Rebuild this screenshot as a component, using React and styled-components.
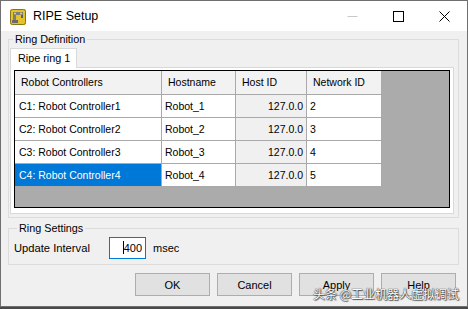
import React from "react";
import styled, { createGlobalStyle } from "styled-components";

const GlobalStyle = createGlobalStyle`
  html, body {
    margin: 0;
    padding: 0;
    background: #4a4a4a;
  }
  body {
    font-family: "Liberation Sans", Arial, sans-serif;
  }
`;

const rows = [
  { name: "C1: Robot Controller1", host: "Robot_1", hostId: "127.0.0", net: "2" },
  { name: "C2: Robot Controller2", host: "Robot_2", hostId: "127.0.0", net: "3" },
  { name: "C3: Robot Controller3", host: "Robot_3", hostId: "127.0.0", net: "4" },
  { name: "C4: Robot Controller4", host: "Robot_4", hostId: "127.0.0", net: "5", selected: true },
];

const RobotIcon = () => (
  <svg width="16" height="16" viewBox="0 0 16 16">
    <rect x="0" y="0" width="16" height="16" rx="2" fill="#e3c22b" />
    <rect x="0.5" y="0.5" width="15" height="15" rx="2" fill="none" stroke="#8a7418" />
    <path d="M3 3 H13 V6 H3 Z" fill="#7d7d7d" />
    <circle cx="5" cy="4.5" r="1" fill="#f2d84a" />
    <circle cx="11" cy="4.5" r="1" fill="#f2d84a" />
    <path d="M3 6 H6 V11 H3 Z" fill="#7d7d7d" />
    <path d="M11 6 H13 V9 H11 Z" fill="#5f5f5f" />
    <path d="M2 11 H8 V14 H2 Z" fill="#6a6a6a" />
  </svg>
);

const App = () => {
  return (
    <>
      <GlobalStyle />
      <Window>
        <TitleBar>
          <IconBox>
            <RobotIcon />
          </IconBox>
          <Title>RIPE Setup</Title>
          <Controls>
            <CaptionButton>
              <svg width="11" height="11" viewBox="0 0 11 11">
                <path d="M0.5 5.5 H10.5" stroke="#c8c8c8" strokeWidth="1" />
              </svg>
            </CaptionButton>
            <CaptionButton>
              <svg width="11" height="11" viewBox="0 0 11 11">
                <rect x="0.5" y="0.5" width="10" height="10" fill="none" stroke="#000" />
              </svg>
            </CaptionButton>
            <CaptionButton>
              <svg width="11" height="11" viewBox="0 0 11 11">
                <path d="M0.5 0.5 L10.5 10.5 M10.5 0.5 L0.5 10.5" stroke="#000" strokeWidth="1" />
              </svg>
            </CaptionButton>
          </Controls>
        </TitleBar>

        <Body>
          <Group $pad="3px 4px 3px 1px" $top="2px">
            <Legend>Ring Definition</Legend>
            <TabStrip>
              <Tab>Ripe ring 1</Tab>
            </TabStrip>
            <TabPanel>
              <GridArea>
                <Grid>
                  <HeadCell>Robot Controllers</HeadCell>
                  <HeadCell>Hostname</HeadCell>
                  <HeadCell>Host ID</HeadCell>
                  <HeadCell>Network ID</HeadCell>
                  {rows.map((r) => (
                    <React.Fragment key={r.name}>
                      <Cell $selected={r.selected} $pl="4px">{r.name}</Cell>
                      <Cell $pl="3px">{r.host}</Cell>
                      <Cell $shaded $right>{r.hostId}</Cell>
                      <Cell $pl="3px">{r.net}</Cell>
                    </React.Fragment>
                  ))}
                </Grid>
              </GridArea>
            </TabPanel>
          </Group>

          <Group $pad="2px 4px 5px 5px" $top="4px">
            <Legend>Ring Settings</Legend>
            <SettingRow>
              <Label>Update Interval</Label>
              <NumberBox>
                <Caret />
                400
              </NumberBox>
              <Unit>msec</Unit>
            </SettingRow>
          </Group>

          <ButtonRow>
            <Button>OK</Button>
            <Button>Cancel</Button>
            <Button>Apply</Button>
            <Button>Help</Button>
          </ButtonRow>
          <Watermark>头条 @工业机器人虚拟调试</Watermark>
        </Body>
      </Window>
    </>
  );
};

const Window = styled.div`
  position: relative;
  width: 468px;
  height: 307px;
  box-sizing: border-box;
  border: 1px solid #707070;
  background: #f0f0f0;
  display: flex;
  flex-direction: column;
  overflow: hidden;
`;

const TitleBar = styled.div`
  height: 30px;
  background: #ffffff;
  display: flex;
  align-items: center;
  flex-shrink: 0;
`;

const IconBox = styled.div`
  width: 16px;
  height: 16px;
  margin-left: 9px;
  margin-top: 1px;
  display: flex;
`;

const Title = styled.div`
  margin-left: 7px;
  font-family: "Liberation Sans", Arial, sans-serif;
  font-size: 12.5px;
  color: #000;
`;

const Controls = styled.div`
  margin-left: auto;
  display: flex;
  height: 100%;
`;

const CaptionButton = styled.div`
  width: 46px;
  height: 100%;
  display: flex;
  align-items: center;
  justify-content: center;
`;

const Body = styled.div`
  flex: 1;
  padding: 0 8px 0 7px;
  display: flex;
  flex-direction: column;
  font-size: 11px;
`;

const Group = styled.fieldset`
  margin: ${(p) => p.$top} 0 0 0;
  padding: ${(p) => p.$pad};
  border: 1px solid #dcdcdc;
  min-width: 0;
`;

const Legend = styled.legend`
  padding: 0 2px;
  margin-left: 3px;
  font-size: 10.8px;
  line-height: 12px;
  color: #000;
`;

const TabStrip = styled.div`
  display: flex;
  height: 20px;
  position: relative;
  z-index: 1;
`;

const Tab = styled.div`
  box-sizing: border-box;
  height: 20px;
  width: 67px;
  padding-left: 7px;
  border: 1px solid #d9d9d9;
  border-bottom: none;
  background: #ffffff;
  font-size: 10.8px;
  line-height: 19px;
`;

const TabPanel = styled.div`
  height: 141px;
  border: 1px solid #d9d9d9;
  background: #ffffff;
  padding: 2px 3px;
  margin-top: -1px;
`;

const GridArea = styled.div`
  height: 136px;
  border: 1px solid #000;
  background: #ababab;
`;

const Grid = styled.div`
  display: grid;
  grid-template-columns: 147px 74px 71px 75px;
  width: max-content;
  font-size: 10.5px;
`;

const HeadCell = styled.div`
  box-sizing: border-box;
  height: 24px;
  line-height: 23px;
  padding-left: 6px;
  background: #f2f2f2;
  border-right: 1px solid #a9a9a9;
  border-bottom: 1px solid #a9a9a9;
  color: #000;
  white-space: nowrap;
`;

const Cell = styled.div`
  box-sizing: border-box;
  height: 23px;
  line-height: 22px;
  padding-left: ${(p) => p.$pl || "3px"};
  padding-right: 3px;
  text-align: ${(p) => (p.$right ? "right" : "left")};
  background: ${(p) => (p.$selected ? "#0078d7" : p.$shaded ? "#f0f0f0" : "#ffffff")};
  color: ${(p) => (p.$selected ? "#ffffff" : "#000")};
  border-right: 1px solid #a9a9a9;
  border-bottom: 1px solid #a9a9a9;
  white-space: nowrap;
`;

const SettingRow = styled.div`
  display: flex;
  align-items: center;
  height: 23px;
`;

const Label = styled.div`
  width: 95px;
  font-size: 11.2px;
`;

const NumberBox = styled.div`
  box-sizing: border-box;
  width: 37px;
  height: 22px;
  border: 1px solid #0078d7;
  background: #ffffff;
  display: flex;
  align-items: center;
  justify-content: flex-end;
  padding-right: 3px;
  font-size: 11px;
`;

const Caret = styled.span`
  display: inline-block;
  width: 1px;
  height: 13px;
  background: #000;
`;

const Unit = styled.div`
  margin-left: 7px;
  font-size: 11px;
`;

const ButtonRow = styled.div`
  display: flex;
  justify-content: flex-end;
  gap: 7px;
  margin-top: 8px;
  margin-right: 3px;
`;

const Button = styled.div`
  box-sizing: border-box;
  width: 75px;
  height: 23px;
  border: 1px solid #adadad;
  background: #e1e1e1;
  display: flex;
  align-items: center;
  justify-content: center;
  font-size: 11px;
  color: #000;
`;

const Watermark = styled.div`
  position: absolute;
  right: 8px;
  bottom: 4px;
  font-family: "Noto Sans CJK SC", sans-serif;
  font-size: 12px;
  color: #ffffff;
  text-shadow: 0 0 1px #333, 0 0 1px #333, 1px 1px 1px #555;
  white-space: nowrap;
`;

export default App;
